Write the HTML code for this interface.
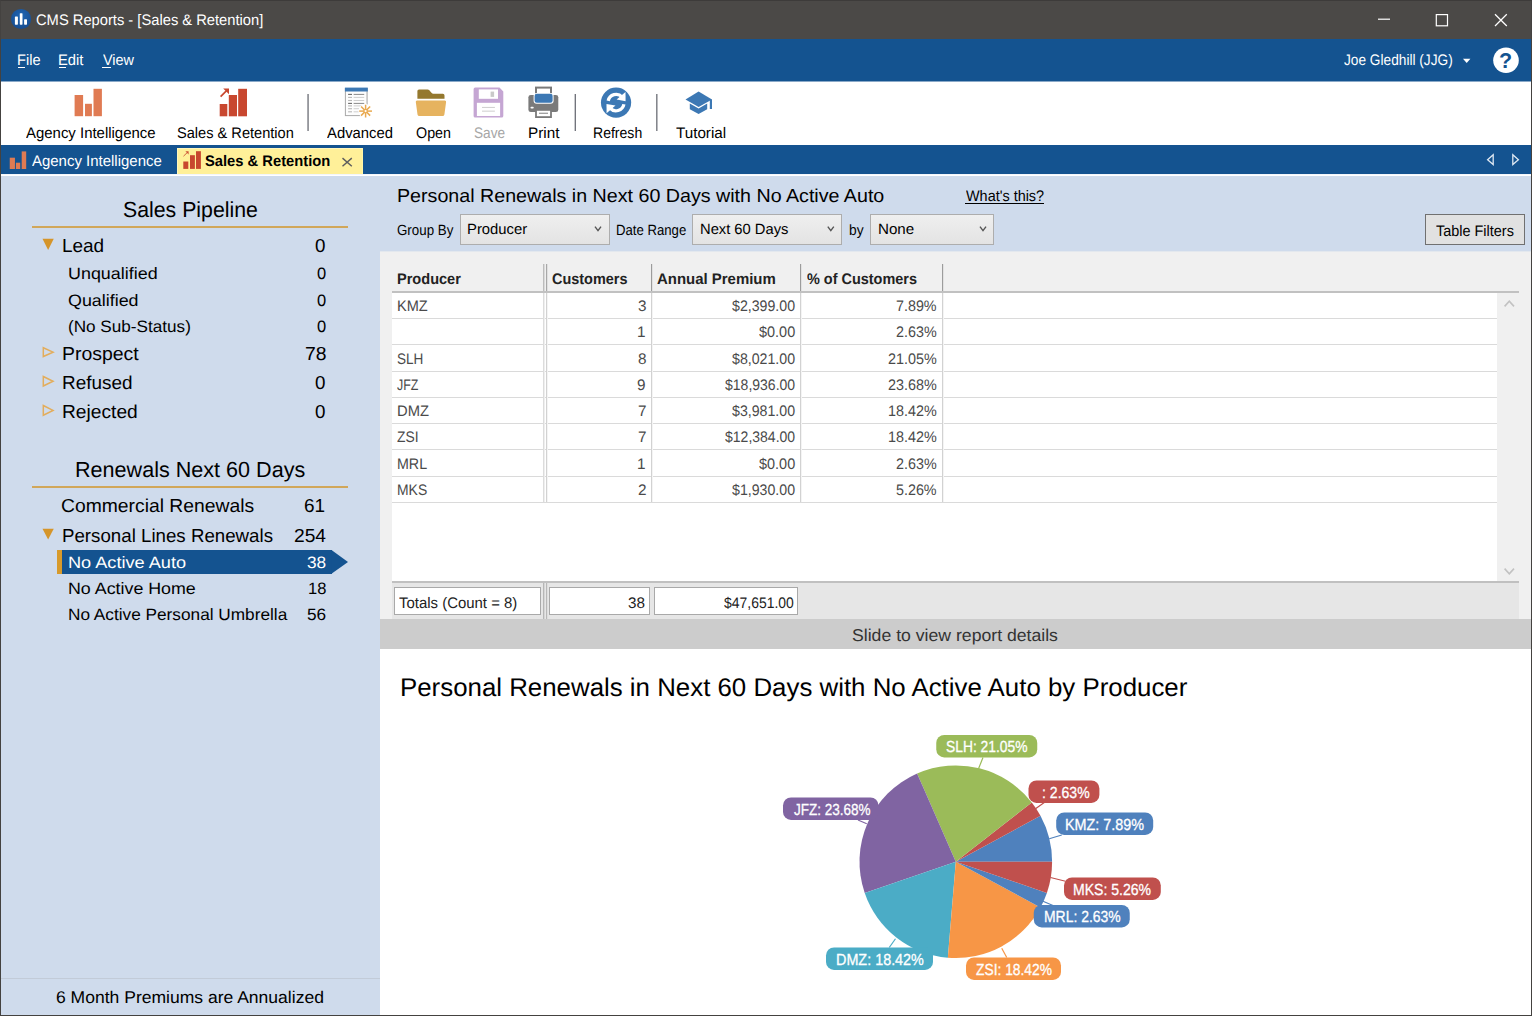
<!DOCTYPE html>
<html><head><meta charset="utf-8"><title>CMS Reports - [Sales &amp; Retention]</title>
<style>
*{margin:0;padding:0;box-sizing:border-box}
html,body{width:1532px;height:1016px;overflow:hidden;background:#fff}
body{position:relative;font-family:"Liberation Sans",sans-serif;}
.a{position:absolute}
.t{position:absolute;white-space:pre;line-height:1;font-family:"Liberation Sans",sans-serif;text-rendering:geometricPrecision}
</style></head><body>
<div class="a" style="left:0px;top:0px;width:1532px;height:39px;background:#4b4947;"></div>
<div class="a" style="left:0px;top:39px;width:1532px;height:42px;background:#145390;"></div>
<div class="a" style="left:0px;top:81px;width:1532px;height:64px;background:#fff;"></div>
<div class="a" style="left:0px;top:81px;width:1532px;height:1px;background:#8aa9c8;"></div>
<div class="a" style="left:0px;top:145px;width:1532px;height:29px;background:#145390;"></div>
<div class="a" style="left:0px;top:174px;width:1532px;height:1.4px;background:#f3f6fb;"></div>
<div class="a" style="left:0px;top:175.5px;width:380px;height:841px;background:#cfdbec;"></div>
<div class="a" style="left:380px;top:175.5px;width:1152px;height:75.5px;background:#cfdbec;"></div>
<div class="a" style="left:380px;top:251px;width:1152px;height:368px;background:#f0f0f0;"></div>
<div class="a" style="left:380px;top:251px;width:1152px;height:1px;background:#e3e8ee;"></div>
<div class="a" style="left:392px;top:293px;width:1105px;height:288px;background:#fff;"></div>
<div class="a" style="left:392px;top:583px;width:1126.5px;height:36px;background:#e6e6e6;"></div>
<div class="a" style="left:380px;top:619px;width:1152px;height:29.5px;background:#cccccc;"></div>
<div class="a" style="left:380px;top:648.5px;width:1152px;height:368px;background:#fff;"></div>
<div class="a" style="left:177px;top:148px;width:186.3px;height:26px;background:#fff099;border-top:1px solid #fff6bd;border-left:1px solid #fff6bd;border-right:1px solid #fff6a8;"></div>
<div class="a" style="left:392px;top:318px;width:1105px;height:1px;background:#dadada;"></div>
<div class="a" style="left:392px;top:344.25px;width:1105px;height:1px;background:#dadada;"></div>
<div class="a" style="left:392px;top:370.5px;width:1105px;height:1px;background:#dadada;"></div>
<div class="a" style="left:392px;top:396.75px;width:1105px;height:1px;background:#dadada;"></div>
<div class="a" style="left:392px;top:423px;width:1105px;height:1px;background:#dadada;"></div>
<div class="a" style="left:392px;top:449.25px;width:1105px;height:1px;background:#dadada;"></div>
<div class="a" style="left:392px;top:475.5px;width:1105px;height:1px;background:#dadada;"></div>
<div class="a" style="left:392px;top:501.75px;width:1105px;height:1px;background:#dadada;"></div>
<div class="a" style="left:543px;top:264px;width:1px;height:27px;background:#bcbcbc;"></div>
<div class="a" style="left:543px;top:293px;width:1px;height:209px;background:#dcdcdc;"></div>
<div class="a" style="left:544px;top:264px;width:1px;height:27px;background:#dadada;"></div>
<div class="a" style="left:544px;top:293px;width:1px;height:209px;background:#efefef;"></div>
<div class="a" style="left:546px;top:264px;width:1px;height:27px;background:#a8a8a8;"></div>
<div class="a" style="left:546px;top:293px;width:1px;height:209px;background:#d2d2d2;"></div>
<div class="a" style="left:547px;top:264px;width:1px;height:27px;background:#e0e0e0;"></div>
<div class="a" style="left:547px;top:293px;width:1px;height:209px;background:#f4f4f4;"></div>
<div class="a" style="left:651px;top:264px;width:1px;height:27px;background:#9c9c9c;"></div>
<div class="a" style="left:651px;top:293px;width:1px;height:209px;background:#d2d2d2;"></div>
<div class="a" style="left:652px;top:264px;width:1px;height:27px;background:#e2e2e2;"></div>
<div class="a" style="left:652px;top:293px;width:1px;height:209px;background:#f4f4f4;"></div>
<div class="a" style="left:800px;top:264px;width:1px;height:27px;background:#9c9c9c;"></div>
<div class="a" style="left:800px;top:293px;width:1px;height:209px;background:#d2d2d2;"></div>
<div class="a" style="left:801px;top:264px;width:1px;height:27px;background:#e2e2e2;"></div>
<div class="a" style="left:801px;top:293px;width:1px;height:209px;background:#f4f4f4;"></div>
<div class="a" style="left:942px;top:264px;width:1px;height:27px;background:#9c9c9c;"></div>
<div class="a" style="left:942px;top:293px;width:1px;height:209px;background:#d2d2d2;"></div>
<div class="a" style="left:943px;top:264px;width:1px;height:27px;background:#e2e2e2;"></div>
<div class="a" style="left:943px;top:293px;width:1px;height:209px;background:#f4f4f4;"></div>
<div class="a" style="left:543px;top:583px;width:1px;height:36px;background:#b6b6b6;"></div>
<div class="a" style="left:544px;top:583px;width:1px;height:36px;background:#d6d6d6;"></div>
<div class="a" style="left:546px;top:583px;width:1px;height:36px;background:#b8b8b8;"></div>
<div class="a" style="left:547px;top:583px;width:1px;height:36px;background:#dedede;"></div>
<div class="a" style="left:392px;top:291px;width:1126.5px;height:2px;background:#c1c1c1;"></div>
<div class="a" style="left:392px;top:581px;width:1126.5px;height:2px;background:#c0c0c0;"></div>
<div class="a" style="left:393.75px;top:587px;width:147px;height:28px;background:#fff;border:1px solid #a9a9a9;"></div>
<div class="a" style="left:548.75px;top:587px;width:100.75px;height:28px;background:#fff;border:1px solid #a9a9a9;"></div>
<div class="a" style="left:653.75px;top:587px;width:144.25px;height:28px;background:#fff;border:1px solid #a9a9a9;"></div>
<div class="a" style="left:460px;top:214px;width:149.6px;height:30.6px;background:linear-gradient(#efefef,#e3e3e3);border:1px solid #adadad;"></div>
<div class="a" style="left:692px;top:214px;width:149.75px;height:30.6px;background:linear-gradient(#efefef,#e3e3e3);border:1px solid #adadad;"></div>
<div class="a" style="left:870px;top:214px;width:124.4px;height:30.6px;background:linear-gradient(#efefef,#e3e3e3);border:1px solid #adadad;"></div>
<div class="a" style="left:1425px;top:214px;width:100px;height:31px;background:#e1e1e1;border:1px solid #707070;"></div>
<div class="a" style="left:32px;top:226.25px;width:316px;height:1.75px;background:#d1a75a;"></div>
<div class="a" style="left:32px;top:486.25px;width:316px;height:1.75px;background:#d1a75a;"></div>
<div class="a" style="left:1px;top:978px;width:379px;height:1px;background:#c2cbd8;"></div>
<div class="a" style="left:57px;top:550px;width:5.25px;height:23.75px;background:#d79a2b;"></div>
<div class="a" style="left:62px;top:550px;width:270px;height:23.75px;background:#145390;"></div>
<div class="a" style="left:965px;top:203px;width:78.75px;height:1px;background:#000;"></div>
<div class="a" style="left:17.5px;top:67.25px;width:7px;height:1px;background:#fff;"></div>
<div class="a" style="left:58.5px;top:67.25px;width:7px;height:1px;background:#fff;"></div>
<div class="a" style="left:102px;top:67.25px;width:8.5px;height:1px;background:#fff;"></div>
<svg class="a" style="left:0;top:0" width="1532" height="1016" viewBox="0 0 1532 1016">
<polygon points="331.5,550 348,561.9 331.5,573.75" fill="#145390"/>
<polygon points="42.5,238.75 53.75,238.75 48.125,250" fill="#d5952a"/>
<polygon points="42.5,528.75 53.75,528.75 48.125,539.5" fill="#d5952a"/>
<polygon points="43.3,347.75 53.05,352.125 43.3,356.5" fill="none" stroke="#e3ad5c" stroke-width="1.5" stroke-linejoin="miter"/>
<polygon points="43.3,376.5 53.05,381.25 43.3,386" fill="none" stroke="#e3ad5c" stroke-width="1.5" stroke-linejoin="miter"/>
<polygon points="43.3,405.5 53.05,410.375 43.3,415.25" fill="none" stroke="#e3ad5c" stroke-width="1.5" stroke-linejoin="miter"/>
<defs><radialGradient id="tg" cx="0.5" cy="0.35" r="0.7"><stop offset="0" stop-color="#1f66b4"/><stop offset="1" stop-color="#164a8c"/></radialGradient></defs>
<circle cx="21.05" cy="19" r="10.1" fill="url(#tg)"/>
<rect x="14.9" y="16.4" width="3" height="8.3" rx="0.6" fill="#fff"/><rect x="19.8" y="13.15" width="2.7" height="11.55" rx="0.6" fill="#fff"/><rect x="24.1" y="19.35" width="2.9" height="5.35" rx="0.6" fill="#fff"/>
<rect x="1378" y="18.6" width="12" height="1.2" fill="#fff"/>
<rect x="1436.3" y="14.6" width="11.2" height="11.2" fill="none" stroke="#fff" stroke-width="1.2"/>
<path d="M1495,14.2 L1506.8,26 M1506.8,14.2 L1495,26" stroke="#fff" stroke-width="1.25" fill="none"/>
<polygon points="1463,58.8 1470.4,58.8 1466.7,63" fill="#fff"/>
<circle cx="1506" cy="60.3" r="12.8" fill="#fff"/>
<polygon points="1493.2,154.8 1493.2,164.6 1487.6,159.7" fill="none" stroke="#dfe8f2" stroke-width="1.3"/>
<polygon points="1512.8,154.8 1512.8,164.6 1518.4,159.7" fill="none" stroke="#dfe8f2" stroke-width="1.3"/>
<path d="M342.5,158.1 L351.8,166.3 M351.8,158.1 L342.5,166.3" stroke="#5e5e5e" stroke-width="1.4" fill="none"/>
<rect x="307.5" y="94" width="1.1" height="37" fill="#50535c"/>
<rect x="574.7" y="94" width="1.1" height="37" fill="#50535c"/>
<rect x="656.3" y="94" width="1.1" height="37" fill="#50535c"/>
<rect x="74.6" y="95" width="8.5" height="21.2" fill="#e07b53"/><rect x="85" y="103.8" width="6.9" height="12.4" fill="#e07b53"/><rect x="93.5" y="88.8" width="8.4" height="27.4" fill="#e07b53"/>
<rect x="219.7" y="104" width="7.6" height="12.3" fill="#c8472f"/><rect x="228.8" y="95" width="8.2" height="21.3" fill="#c8472f"/><rect x="238.2" y="88.8" width="8.8" height="27.5" fill="#c8472f"/>
<path d="M220.6,96.6 L227.6,89.6" stroke="#c8472f" stroke-width="1.7" fill="none"/><polygon points="223.2,88.4 229,88.4 229,94.2" fill="#c8472f"/>
<rect x="9.75" y="157.7" width="5.2" height="11.3" fill="#e07b53"/><rect x="15.9" y="162.7" width="4.3" height="6.3" fill="#e07b53"/><rect x="21.7" y="151.4" width="4.5" height="17.6" fill="#e07b53"/>
<rect x="183.3" y="161.5" width="5" height="7.4" fill="#c8472f"/><rect x="190" y="155.2" width="4.9" height="13.7" fill="#c8472f"/><rect x="196" y="151.2" width="4.9" height="17.7" fill="#c8472f"/>
<path d="M183.5,156.2 L187.6,152.2" stroke="#c8472f" stroke-width="1" fill="none" opacity="0.85"/><polygon points="185.4,151.3 188.6,151.3 188.6,154.5" fill="#c8472f" opacity="0.9"/>
<rect x="345.4" y="88.6" width="21.8" height="27" fill="#fdfdfd" stroke="#a9a9a9" stroke-width="1"/>
<rect x="366.4" y="91.5" width="1.6" height="12" fill="#c9c9c9"/>
<rect x="344.9" y="87.6" width="22.9" height="3.9" fill="#3c78b4"/>
<rect x="348.1" y="93.85" width="3.9" height="1.1" fill="#6a6a6a"/><rect x="353.6" y="93.90" width="10.6" height="1" fill="#8a8a8a"/>
<rect x="348.1" y="96.85" width="3.9" height="1.1" fill="#b8b8b8"/><rect x="353.6" y="96.90" width="10.6" height="1" fill="#cfcfcf"/>
<rect x="348.1" y="99.95" width="3.9" height="1.1" fill="#b8b8b8"/><rect x="353.6" y="100.00" width="10.6" height="1" fill="#cfcfcf"/>
<rect x="348.1" y="102.85" width="3.9" height="1.1" fill="#6a6a6a"/><rect x="353.6" y="102.90" width="10.6" height="1" fill="#8a8a8a"/>
<rect x="348.1" y="105.35" width="3.9" height="1.1" fill="#b8b8b8"/><rect x="353.6" y="105.40" width="10.6" height="1" fill="#cfcfcf"/>
<rect x="348.1" y="108.15" width="3.9" height="1.1" fill="#b8b8b8"/><rect x="353.6" y="108.20" width="10.6" height="1" fill="#cfcfcf"/>
<rect x="348.1" y="111.25" width="3.9" height="1.1" fill="#b8b8b8"/><rect x="353.6" y="111.30" width="10.6" height="1" fill="#cfcfcf"/>
<circle cx="365.6" cy="111.1" r="7.2" fill="#fff"/>
<path d="M359.20,111.10 L372.00,111.10" stroke="#e9a94f" stroke-width="1.5"/>
<path d="M361.07,106.57 L370.13,115.63" stroke="#e9a94f" stroke-width="1.5"/>
<path d="M365.60,104.70 L365.60,117.50" stroke="#e9a94f" stroke-width="1.5"/>
<path d="M370.13,106.57 L361.07,115.63" stroke="#e9a94f" stroke-width="1.5"/>
<circle cx="365.6" cy="111.1" r="2.3" fill="#e9a94f"/><circle cx="365.6" cy="111.1" r="1.1" fill="#fff"/>
<path d="M417.4,91 a1.6,1.6 0 0 1 1.6,-1.6 h8.6 a2,2 0 0 1 1.5,0.7 l2.6,3 a2,2 0 0 0 1.5,0.7 h9.7 a1.6,1.6 0 0 1 1.6,1.6 v3.4 h-27.1 z" fill="#94782e"/>
<path d="M417.1,100.4 h27.7 a1.3,1.3 0 0 1 1.3,1.5 l-1.7,12.5 a1.9,1.9 0 0 1 -1.9,1.6 h-23.1 a1.9,1.9 0 0 1 -1.9,-1.6 l-1.7,-12.5 a1.3,1.3 0 0 1 1.3,-1.5 z" fill="#e6b35f"/>
<path d="M475.2,87.6 h24.3 l3.8,3.9 v24.5 a1.6,1.6 0 0 1 -1.6,1.6 h-26.5 a1.6,1.6 0 0 1 -1.6,-1.6 v-26.8 a1.6,1.6 0 0 1 1.6,-1.6 z" fill="#c5a6d3"/>
<rect x="478.8" y="89.4" width="19.2" height="9.4" fill="#fff"/><rect x="490.6" y="91.6" width="3.5" height="5.3" fill="#c9c9c9"/>
<rect x="476.9" y="102.8" width="23.2" height="13.2" fill="#fff"/>
<rect x="482" y="106.9" width="12.9" height="1.1" fill="#d2d2d2"/><rect x="482" y="110.6" width="12.9" height="1.1" fill="#d2d2d2"/>
<rect x="536" y="87.6" width="15" height="8" fill="#fff" stroke="#7a7a7a" stroke-width="2" />
<rect x="528.4" y="94.9" width="29.9" height="17.2" rx="2.4" fill="#7a7a7a"/>
<rect x="533.6" y="92.9" width="20" height="10.8" rx="3" fill="#fff"/>
<rect x="534.6" y="93.8" width="18" height="8.9" rx="2.2" fill="#3c78b4"/>
<rect x="536" y="109.9" width="15" height="7.2" fill="#fff" stroke="#7a7a7a" stroke-width="1.8"/>
<rect x="539" y="112.7" width="9" height="1.1" fill="#8c8c8c"/>
<rect x="530.5" y="106.7" width="3.2" height="1.9" rx="0.8" fill="#fff"/>
<circle cx="616.05" cy="102.6" r="15.1" fill="#3c78b4"/>
<path d="M608.2,100.9 a8.1,8.1 0 0 1 13.9,-3.9" fill="none" stroke="#fff" stroke-width="3.3"/><polygon points="625.5,91.9 625.6,101.2 616.6,99.6" fill="#fff"/>
<path d="M623.9,104.3 a8.1,8.1 0 0 1 -13.9,3.9" fill="none" stroke="#fff" stroke-width="3.3"/><polygon points="606.6,113.3 606.5,104 615.5,105.6" fill="#fff"/>
<polygon points="685.5,99.4 698.6,91.4 712,99.4 698.6,106.9" fill="#3c78b4"/>
<path d="M689.8,103.6 l8.8,5 l8.6,-5 v5.6 l-8.6,4.7 l-8.8,-4.7 z" fill="#3c78b4"/>
<rect x="709.8" y="99.4" width="2.2" height="9.6" fill="#3c78b4"/>
<path d="M595,226.6 L598,230.6 L601,226.6" fill="none" stroke="#555" stroke-width="1.4"/>
<path d="M827.8,226.6 L830.8,230.6 L833.8,226.6" fill="none" stroke="#555" stroke-width="1.4"/>
<path d="M980,226.6 L983,230.6 L986,226.6" fill="none" stroke="#555" stroke-width="1.4"/>
<path d="M1504.6,306.4 L1509.3,301.2 L1514,306.4" fill="none" stroke="#c2c2c2" stroke-width="1.6"/>
<path d="M1504.6,568.6 L1509.3,573.8 L1514,568.6" fill="none" stroke="#c2c2c2" stroke-width="1.6"/>
<path d="M955.8,861.7 L1052.10,861.70 A96.3,96.3 0 0 0 1040.49,815.87 Z" fill="#4f81bd"/>
<path d="M955.8,861.7 L1040.49,815.87 A96.3,96.3 0 0 0 1031.79,802.55 Z" fill="#c0504d"/>
<path d="M955.8,861.7 L1031.79,802.55 A96.3,96.3 0 0 0 917.12,773.51 Z" fill="#9bbb59"/>
<path d="M955.8,861.7 L917.12,773.51 A96.3,96.3 0 0 0 864.72,892.97 Z" fill="#8064a2"/>
<path d="M955.8,861.7 L864.72,892.97 A96.3,96.3 0 0 0 947.85,957.67 Z" fill="#4bacc6"/>
<path d="M955.8,861.7 L947.85,957.67 A96.3,96.3 0 0 0 1040.49,907.53 Z" fill="#f79646"/>
<path d="M955.8,861.7 L1040.49,907.53 A96.3,96.3 0 0 0 1046.88,892.97 Z" fill="#4f81bd"/>
<path d="M955.8,861.7 L1046.88,892.97 A96.3,96.3 0 0 0 1052.10,861.70 Z" fill="#c0504d"/>
<path d="M978.5,768.75 L983,757.5" stroke="#9bbb59" stroke-width="1.2"/>
<path d="M1035.5,808.75 L1044.25,802.5" stroke="#c0504d" stroke-width="1.2"/>
<path d="M1049.25,838.75 L1061.75,835" stroke="#4f81bd" stroke-width="1.2"/>
<path d="M866.75,823.75 L858,820" stroke="#8064a2" stroke-width="1.2"/>
<path d="M895.5,938.75 L889.25,947.5" stroke="#4bacc6" stroke-width="1.2"/>
<path d="M1001.75,948.25 L1006.75,957.5" stroke="#f79646" stroke-width="1.2"/>
<path d="M1043,901.25 L1053,905.5" stroke="#4f81bd" stroke-width="1.2"/>
<path d="M1050.5,877.5 L1065.5,881.25" stroke="#c0504d" stroke-width="1.2"/>
<rect x="936.25" y="735" width="101.00" height="22.4" rx="8" ry="8" fill="#9bbb59"/>
<rect x="1028.5" y="780.5" width="70.90" height="22.4" rx="8" ry="8" fill="#c0504d"/>
<rect x="1056.2" y="812.5" width="97.00" height="22.4" rx="8" ry="8" fill="#4f81bd"/>
<rect x="783" y="797.5" width="95.50" height="22.4" rx="8" ry="8" fill="#8064a2"/>
<rect x="826" y="947.5" width="107.00" height="22.4" rx="8" ry="8" fill="#4bacc6"/>
<rect x="966" y="957.5" width="95.00" height="22.4" rx="8" ry="8" fill="#f79646"/>
<rect x="1033.75" y="905" width="96.00" height="22.4" rx="8" ry="8" fill="#4f81bd"/>
<rect x="1064" y="877.5" width="96.80" height="22.4" rx="8" ry="8" fill="#c0504d"/>
</svg>
<div class="a" style="left:1492.8px;top:49px;width:25.6px;height:24px;line-height:24px;text-align:center;font-size:21.5px;font-weight:700;color:#145390;font-family:'Liberation Sans',sans-serif">?</div>
<div class="a" style="left:0;top:0;width:1532px;height:1016px;border:1px solid #444240;border-top-color:#3d3b3a;pointer-events:none"></div>
<div class="t" id="t0" style="left:36px;top:13px;font-size:15.3px;color:#ffffff;transform:scaleX(0.9616);transform-origin:0 0;">CMS Reports - [Sales &amp; Retention]</div>
<div class="t" id="t1" style="left:17px;top:53px;font-size:15.3px;color:#ffffff;transform:scaleX(0.9542);transform-origin:0 0;">File</div>
<div class="t" id="t2" style="left:58px;top:53px;font-size:15.3px;color:#ffffff;transform:scaleX(0.9647);transform-origin:0 0;">Edit</div>
<div class="t" id="t3" style="left:103px;top:53px;font-size:15.3px;color:#ffffff;transform:scaleX(0.9440);transform-origin:0 0;">View</div>
<div class="t" id="t4" style="left:1344px;top:53px;font-size:15.3px;color:#ffffff;transform:scaleX(0.8946);transform-origin:0 0;">Joe Gledhill (JJG)</div>
<div class="t" id="t5" style="left:26px;top:126px;font-size:15.3px;color:#000;transform:scaleX(0.9766);transform-origin:0 0;">Agency Intelligence</div>
<div class="t" id="t6" style="left:177px;top:126px;font-size:15.3px;color:#000;transform:scaleX(0.9540);transform-origin:0 0;">Sales &amp; Retention</div>
<div class="t" id="t7" style="left:327px;top:126px;font-size:15.3px;color:#000;transform:scaleX(0.9692);transform-origin:0 0;">Advanced</div>
<div class="t" id="t8" style="left:416px;top:126px;font-size:15.3px;color:#000;transform:scaleX(0.9356);transform-origin:0 0;">Open</div>
<div class="t" id="t9" style="left:474px;top:126px;font-size:15.3px;color:#a6a6a6;transform:scaleX(0.8895);transform-origin:0 0;">Save</div>
<div class="t" id="t10" style="left:528px;top:126px;font-size:15.3px;color:#000;">Print</div>
<div class="t" id="t11" style="left:593px;top:126px;font-size:15.3px;color:#000;transform:scaleX(0.9187);transform-origin:0 0;">Refresh</div>
<div class="t" id="t12" style="left:676px;top:126px;font-size:15.3px;color:#000;transform:scaleX(0.9944);transform-origin:0 0;">Tutorial</div>
<div class="t" id="t13" style="left:32px;top:154px;font-size:15.3px;color:#ffffff;transform:scaleX(0.9781);transform-origin:0 0;">Agency Intelligence</div>
<div class="t" id="t14" style="left:205px;top:154px;font-size:15.3px;color:#000;font-weight:700;transform:scaleX(0.9629);transform-origin:0 0;">Sales &amp; Retention</div>
<div class="t" id="t15" style="left:123px;top:199px;font-size:21.8px;color:#000;transform:scaleX(0.9767);transform-origin:0 0;">Sales Pipeline</div>
<div class="t" id="t16" style="left:62px;top:237px;font-size:18.8px;color:#000;transform:scaleX(1.0087);transform-origin:0 0;">Lead</div>
<div class="t" id="t17" style="left:315px;top:237px;font-size:18.8px;color:#000;">0</div>
<div class="t" id="t18" style="left:68px;top:266px;font-size:16.5px;color:#000;transform:scaleX(1.0852);transform-origin:0 0;">Unqualified</div>
<div class="t" id="t19" style="left:317px;top:266px;font-size:16.5px;color:#000;">0</div>
<div class="t" id="t20" style="left:68px;top:293px;font-size:16.5px;color:#000;transform:scaleX(1.0833);transform-origin:0 0;">Qualified</div>
<div class="t" id="t21" style="left:317px;top:293px;font-size:16.5px;color:#000;">0</div>
<div class="t" id="t22" style="left:68px;top:319px;font-size:16.5px;color:#000;transform:scaleX(1.0384);transform-origin:0 0;">(No Sub-Status)</div>
<div class="t" id="t23" style="left:317px;top:319px;font-size:16.5px;color:#000;">0</div>
<div class="t" id="t24" style="left:62px;top:345px;font-size:18.8px;color:#000;transform:scaleX(1.0349);transform-origin:0 0;">Prospect</div>
<div class="t" id="t25" style="left:305px;top:345px;font-size:18.8px;color:#000;transform:scaleX(1.0290);transform-origin:0 0;">78</div>
<div class="t" id="t26" style="left:62px;top:374px;font-size:18.8px;color:#000;transform:scaleX(1.0076);transform-origin:0 0;">Refused</div>
<div class="t" id="t27" style="left:315px;top:374px;font-size:18.8px;color:#000;">0</div>
<div class="t" id="t28" style="left:62px;top:403px;font-size:18.8px;color:#000;transform:scaleX(1.0218);transform-origin:0 0;">Rejected</div>
<div class="t" id="t29" style="left:315px;top:403px;font-size:18.8px;color:#000;">0</div>
<div class="t" id="t30" style="left:75px;top:459px;font-size:21.8px;color:#000;transform:scaleX(0.9897);transform-origin:0 0;">Renewals Next 60 Days</div>
<div class="t" id="t31" style="left:61px;top:497px;font-size:18.8px;color:#000;transform:scaleX(1.0281);transform-origin:0 0;">Commercial Renewals</div>
<div class="t" id="t32" style="left:304px;top:497px;font-size:18.8px;color:#000;transform:scaleX(1.0101);transform-origin:0 0;">61</div>
<div class="t" id="t33" style="left:62px;top:527px;font-size:18.8px;color:#000;transform:scaleX(0.9956);transform-origin:0 0;">Personal Lines Renewals</div>
<div class="t" id="t34" style="left:294px;top:527px;font-size:18.8px;color:#000;transform:scaleX(1.0231);transform-origin:0 0;">254</div>
<div class="t" id="t35" style="left:68px;top:555px;font-size:16.5px;color:#ffffff;transform:scaleX(1.1005);transform-origin:0 0;">No Active Auto</div>
<div class="t" id="t36" style="left:307px;top:555px;font-size:16.5px;color:#ffffff;transform:scaleX(1.0468);transform-origin:0 0;">38</div>
<div class="t" id="t37" style="left:68px;top:581px;font-size:16.5px;color:#000;transform:scaleX(1.0802);transform-origin:0 0;">No Active Home</div>
<div class="t" id="t38" style="left:308px;top:581px;font-size:16.5px;color:#000;transform:scaleX(1.0032);transform-origin:0 0;">18</div>
<div class="t" id="t39" style="left:68px;top:607px;font-size:16.5px;color:#000;transform:scaleX(1.0440);transform-origin:0 0;">No Active Personal Umbrella</div>
<div class="t" id="t40" style="left:307px;top:607px;font-size:16.5px;color:#000;transform:scaleX(1.0461);transform-origin:0 0;">56</div>
<div class="t" id="t41" style="left:56px;top:989px;font-size:17px;color:#000;transform:scaleX(1.0310);transform-origin:0 0;">6 Month Premiums are Annualized</div>
<div class="t" id="t42" style="left:397px;top:187px;font-size:18.8px;color:#000;transform:scaleX(1.0466);transform-origin:0 0;">Personal Renewals in Next 60 Days with No Active Auto</div>
<div class="t" id="t43" style="left:966px;top:189px;font-size:15.3px;color:#000;transform:scaleX(0.9429);transform-origin:0 0;">What's this?</div>
<div class="t" id="t44" style="left:397px;top:224px;font-size:14.8px;color:#000;transform:scaleX(0.9008);transform-origin:0 0;">Group By</div>
<div class="t" id="t45" style="left:467px;top:223px;font-size:14.8px;color:#000;transform:scaleX(1.0010);transform-origin:0 0;">Producer</div>
<div class="t" id="t46" style="left:616px;top:224px;font-size:14.8px;color:#000;transform:scaleX(0.8895);transform-origin:0 0;">Date Range</div>
<div class="t" id="t47" style="left:700px;top:223px;font-size:14.8px;color:#000;transform:scaleX(0.9952);transform-origin:0 0;">Next 60 Days</div>
<div class="t" id="t48" style="left:849px;top:224px;font-size:14.8px;color:#000;transform:scaleX(0.9318);transform-origin:0 0;">by</div>
<div class="t" id="t49" style="left:878px;top:223px;font-size:14.8px;color:#000;transform:scaleX(1.0239);transform-origin:0 0;">None</div>
<div class="t" id="t50" style="left:1436px;top:224px;font-size:15.3px;color:#000;transform:scaleX(0.9443);transform-origin:0 0;">Table Filters</div>
<div class="t" id="t51" style="left:397px;top:272px;font-size:15.3px;color:#222;font-weight:700;transform:scaleX(0.9510);transform-origin:0 0;">Producer</div>
<div class="t" id="t52" style="left:552px;top:272px;font-size:15.3px;color:#222;font-weight:700;transform:scaleX(0.9443);transform-origin:0 0;">Customers</div>
<div class="t" id="t53" style="left:657px;top:272px;font-size:15.3px;color:#222;font-weight:700;transform:scaleX(0.9771);transform-origin:0 0;">Annual Premium</div>
<div class="t" id="t54" style="left:807px;top:272px;font-size:15.3px;color:#222;font-weight:700;transform:scaleX(0.9446);transform-origin:0 0;">% of Customers</div>
<div class="t" id="t55" style="left:397px;top:299px;font-size:15.3px;color:#4a4a4a;transform:scaleX(0.9507);transform-origin:0 0;">KMZ</div>
<div class="t" id="t56" style="left:638px;top:299px;font-size:15.3px;color:#4a4a4a;">3</div>
<div class="t" id="t57" style="left:732px;top:299px;font-size:15.3px;color:#4a4a4a;transform:scaleX(0.9266);transform-origin:0 0;">$2,399.00</div>
<div class="t" id="t58" style="left:896px;top:299px;font-size:15.3px;color:#4a4a4a;transform:scaleX(0.9358);transform-origin:0 0;">7.89%</div>
<div class="t" id="t59" style="left:637px;top:325px;font-size:15.3px;color:#4a4a4a;">1</div>
<div class="t" id="t60" style="left:759px;top:325px;font-size:15.3px;color:#4a4a4a;transform:scaleX(0.9454);transform-origin:0 0;">$0.00</div>
<div class="t" id="t61" style="left:896px;top:325px;font-size:15.3px;color:#4a4a4a;transform:scaleX(0.9365);transform-origin:0 0;">2.63%</div>
<div class="t" id="t62" style="left:397px;top:352px;font-size:15.3px;color:#4a4a4a;transform:scaleX(0.8856);transform-origin:0 0;">SLH</div>
<div class="t" id="t63" style="left:638px;top:352px;font-size:15.3px;color:#4a4a4a;">8</div>
<div class="t" id="t64" style="left:732px;top:352px;font-size:15.3px;color:#4a4a4a;transform:scaleX(0.9266);transform-origin:0 0;">$8,021.00</div>
<div class="t" id="t65" style="left:888px;top:352px;font-size:15.3px;color:#4a4a4a;transform:scaleX(0.9398);transform-origin:0 0;">21.05%</div>
<div class="t" id="t66" style="left:397px;top:378px;font-size:15.3px;color:#4a4a4a;transform:scaleX(0.8147);transform-origin:0 0;">JFZ</div>
<div class="t" id="t67" style="left:637px;top:378px;font-size:15.3px;color:#4a4a4a;">9</div>
<div class="t" id="t68" style="left:725px;top:378px;font-size:15.3px;color:#4a4a4a;transform:scaleX(0.9161);transform-origin:0 0;">$18,936.00</div>
<div class="t" id="t69" style="left:888px;top:378px;font-size:15.3px;color:#4a4a4a;transform:scaleX(0.9398);transform-origin:0 0;">23.68%</div>
<div class="t" id="t70" style="left:397px;top:404px;font-size:15.3px;color:#4a4a4a;transform:scaleX(0.9637);transform-origin:0 0;">DMZ</div>
<div class="t" id="t71" style="left:638px;top:404px;font-size:15.3px;color:#4a4a4a;">7</div>
<div class="t" id="t72" style="left:732px;top:404px;font-size:15.3px;color:#4a4a4a;transform:scaleX(0.9266);transform-origin:0 0;">$3,981.00</div>
<div class="t" id="t73" style="left:888px;top:404px;font-size:15.3px;color:#4a4a4a;transform:scaleX(0.9381);transform-origin:0 0;">18.42%</div>
<div class="t" id="t74" style="left:397px;top:430px;font-size:15.3px;color:#4a4a4a;transform:scaleX(0.9041);transform-origin:0 0;">ZSI</div>
<div class="t" id="t75" style="left:638px;top:430px;font-size:15.3px;color:#4a4a4a;">7</div>
<div class="t" id="t76" style="left:725px;top:430px;font-size:15.3px;color:#4a4a4a;transform:scaleX(0.9161);transform-origin:0 0;">$12,384.00</div>
<div class="t" id="t77" style="left:888px;top:430px;font-size:15.3px;color:#4a4a4a;transform:scaleX(0.9381);transform-origin:0 0;">18.42%</div>
<div class="t" id="t78" style="left:397px;top:457px;font-size:15.3px;color:#4a4a4a;transform:scaleX(0.9318);transform-origin:0 0;">MRL</div>
<div class="t" id="t79" style="left:637px;top:457px;font-size:15.3px;color:#4a4a4a;">1</div>
<div class="t" id="t80" style="left:759px;top:457px;font-size:15.3px;color:#4a4a4a;transform:scaleX(0.9454);transform-origin:0 0;">$0.00</div>
<div class="t" id="t81" style="left:896px;top:457px;font-size:15.3px;color:#4a4a4a;transform:scaleX(0.9365);transform-origin:0 0;">2.63%</div>
<div class="t" id="t82" style="left:397px;top:483px;font-size:15.3px;color:#4a4a4a;transform:scaleX(0.9106);transform-origin:0 0;">MKS</div>
<div class="t" id="t83" style="left:638px;top:483px;font-size:15.3px;color:#4a4a4a;">2</div>
<div class="t" id="t84" style="left:732px;top:483px;font-size:15.3px;color:#4a4a4a;transform:scaleX(0.9266);transform-origin:0 0;">$1,930.00</div>
<div class="t" id="t85" style="left:896px;top:483px;font-size:15.3px;color:#4a4a4a;transform:scaleX(0.9361);transform-origin:0 0;">5.26%</div>
<div class="t" id="t86" style="left:399px;top:596px;font-size:15.3px;color:#222;transform:scaleX(0.9762);transform-origin:0 0;">Totals (Count = 8)</div>
<div class="t" id="t87" style="left:628px;top:596px;font-size:15.3px;color:#222;transform:scaleX(0.9979);transform-origin:0 0;">38</div>
<div class="t" id="t88" style="left:724px;top:596px;font-size:15.3px;color:#222;transform:scaleX(0.9111);transform-origin:0 0;">$47,651.00</div>
<div class="t" id="t89" style="left:852px;top:627px;font-size:17.2px;color:#333;transform:scaleX(1.0265);transform-origin:0 0;">Slide to view report details</div>
<div class="t" id="t90" style="left:400px;top:676px;font-size:25.6px;color:#000;transform:scaleX(1.0099);transform-origin:0 0;">Personal Renewals in Next 60 Days with No Active Auto by Producer</div>
<div class="t" id="t91" style="left:946px;top:740px;font-size:16px;color:#ffffff;transform:scaleX(0.8646);transform-origin:0 0;-webkit-text-stroke:0.3px #fff;">SLH: 21.05%</div>
<div class="t" id="t92" style="left:1042px;top:786px;font-size:16px;color:#ffffff;transform:scaleX(0.8784);transform-origin:0 0;-webkit-text-stroke:0.3px #fff;">: 2.63%</div>
<div class="t" id="t93" style="left:1065px;top:818px;font-size:16px;color:#ffffff;transform:scaleX(0.8989);transform-origin:0 0;-webkit-text-stroke:0.3px #fff;">KMZ: 7.89%</div>
<div class="t" id="t94" style="left:794px;top:803px;font-size:16px;color:#ffffff;transform:scaleX(0.8450);transform-origin:0 0;-webkit-text-stroke:0.3px #fff;">JFZ: 23.68%</div>
<div class="t" id="t95" style="left:836px;top:953px;font-size:16px;color:#ffffff;transform:scaleX(0.8987);transform-origin:0 0;-webkit-text-stroke:0.3px #fff;">DMZ: 18.42%</div>
<div class="t" id="t96" style="left:976px;top:963px;font-size:16px;color:#ffffff;transform:scaleX(0.8626);transform-origin:0 0;-webkit-text-stroke:0.3px #fff;">ZSI: 18.42%</div>
<div class="t" id="t97" style="left:1044px;top:910px;font-size:16px;color:#ffffff;transform:scaleX(0.8709);transform-origin:0 0;-webkit-text-stroke:0.3px #fff;">MRL: 2.63%</div>
<div class="t" id="t98" style="left:1073px;top:883px;font-size:16px;color:#ffffff;transform:scaleX(0.8784);transform-origin:0 0;-webkit-text-stroke:0.3px #fff;">MKS: 5.26%</div>

</body></html>
